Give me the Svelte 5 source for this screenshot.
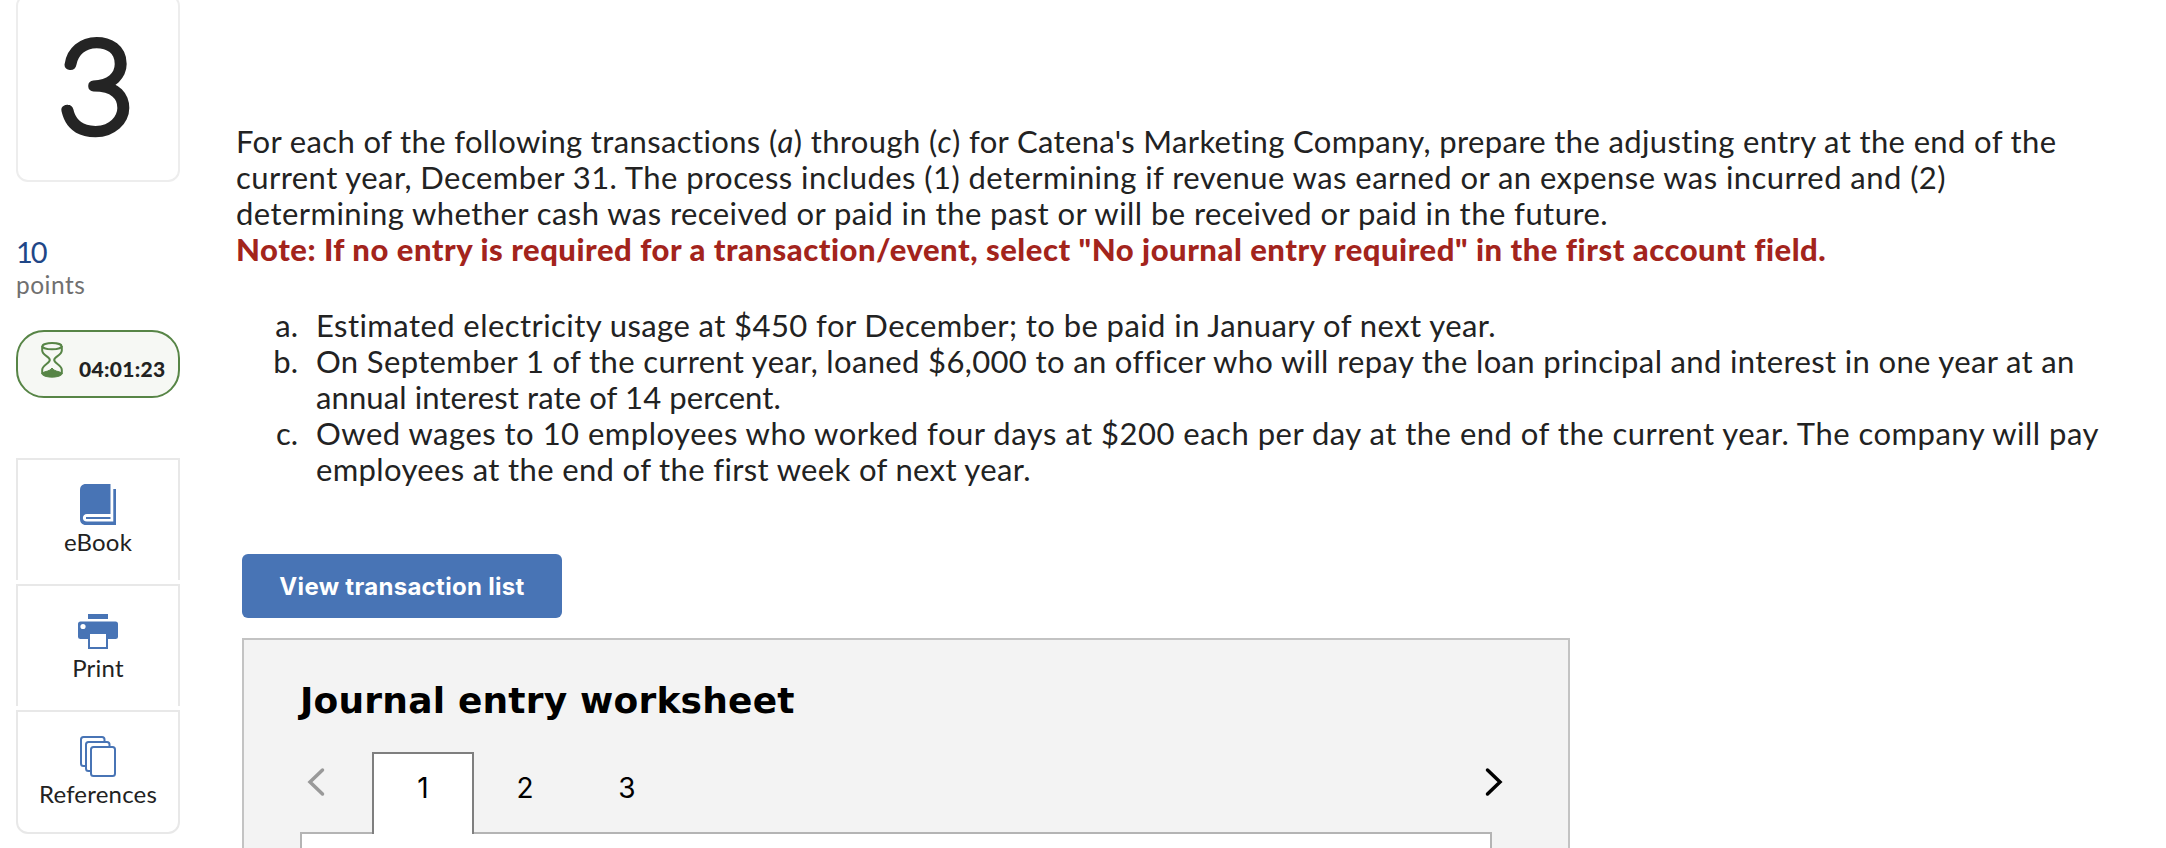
<script lang="ts">
  interface Line {
    text: string;
    spacing: number;
  }

  const tools = [
    { id: 'ebook', label: 'eBook' },
    { id: 'print', label: 'Print' },
    { id: 'references', label: 'References' }
  ];

  const transactions: { marker: string; lines: Line[] }[] = [
    {
      marker: 'a.',
      lines: [{ text: 'Estimated electricity usage at $450 for December; to be paid in January of next year.', spacing: 0.43 }]
    },
    {
      marker: 'b.',
      lines: [
        { text: 'On September 1 of the current year, loaned $6,000 to an officer who will repay the loan principal and interest in one year at an', spacing: 0.36 },
        { text: 'annual interest rate of 14 percent.', spacing: 0.11 }
      ]
    },
    {
      marker: 'c.',
      lines: [
        { text: 'Owed wages to 10 employees who worked four days at $200 each per day at the end of the current year. The company will pay', spacing: 0.495 },
        { text: 'employees at the end of the first week of next year.', spacing: 0.35 }
      ]
    }
  ];

  const pages = [1, 2, 3];
  let current = $state(1);
</script>

<div class="assignment">
  <aside class="sidebar">
    <div class="question-number">
      <svg width="160" height="182" viewBox="0 0 160 182">
        <text transform="translate(78 136) scale(1.04 1)" text-anchor="middle">3</text>
      </svg>
    </div>

    <div class="points">
      <strong>10</strong>
      <span>points</span>
    </div>

    <div class="timer">
      <svg width="22" height="36" viewBox="0 0 22 36" fill="none" stroke="#578546" stroke-width="2">
        <ellipse cx="11" cy="4.2" rx="9.6" ry="3.1" />
        <path d="M1.2 4v4.5c0 5 7.6 6 7.6 9.5S1.2 23 1.2 28v4M20.8 4v4.5c0 5-7.6 6-7.6 9.5s7.6 5 7.6 10v4" />
        <path d="M1.2 31c3-2 8-1.5 9.8-5 1.8 3.5 6.8 3 9.8 5v1.5c-3 3.5-16.6 3.5-19.6 0z" fill="#578546" stroke-width="1" />
      </svg>
      <span>04:01:23</span>
    </div>

    <nav class="tools">
      {#each tools as tool}
        <div class="tool">
          {#if tool.id === 'ebook'}
            <svg width="36" height="42" viewBox="0 0 36 42">
              <path d="M6 0h24.5v30H7c-5 0-6 7.5 0 7.5h26.3V5H36v36H6c-4 0-6-2.500-6-6V6c0-3.500 2-6 6-6z" fill="#4874b5" />
              <path d="M6 34h24.5" stroke="#4874b5" stroke-width="2" />
            </svg>
          {:else if tool.id === 'print'}
            <svg width="40" height="42" viewBox="0 0 40 42">
              <path d="M10 4h20v5H10zM2.5 11.5h35Q40 11.5 40 14v13q0 2-2.5 2H30v10H10V29H2.5Q0 29 0 27V14q0-2.5 2.5-2.5z" fill="#4874b5" />
              <path d="M12 24h16v13H12z" fill="#fff" />
              <circle cx="5" cy="16.5" r="2.6" fill="#fff" />
            </svg>
          {:else}
            <svg width="36" height="42" viewBox="0 0 36 42" fill="#fff" stroke="#4874b5" stroke-width="2">
              <rect x="1" y="1" width="23.5" height="29" rx="2.5" />
              <rect x="6" y="6" width="23.5" height="29" rx="2.5" />
              <rect x="11" y="11" width="24" height="29" rx="2.5" />
            </svg>
          {/if}
          <span class="tool-label">{tool.label}</span>
        </div>
      {/each}
    </nav>
  </aside>

  <main class="content">
    <div class="prompt">
      <div class="l1">For each of the following transactions (<i>a</i>) through (<i>c</i>) for Catena's Marketing Company, prepare the adjusting entry at the end of the</div>
      <div class="l2">current year, December 31. The process includes (1) determining if revenue was earned or an expense was incurred and (2)</div>
      <div class="l3">determining whether cash was received or paid in the past or will be received or paid in the future.</div>
      <div class="note">Note: If no entry is required for a transaction/event, select "No journal entry required" in the first account field.</div>
    </div>

    <div class="transactions">
      {#each transactions as item}
        <div class="transaction">
          <span class="marker">{item.marker}</span>
          <div>
            {#each item.lines as line}
              <div style:letter-spacing="{line.spacing}px">{line.text}</div>
            {/each}
          </div>
        </div>
      {/each}
    </div>

    <button class="view-btn">View transaction list</button>

    <section class="worksheet">
      <h2>Journal entry worksheet</h2>
      <div class="pager">
        <svg class="prev" width="18" height="30" viewBox="0 0 18 30"><path d="M15.5 3L3 15l12.5 12" /></svg>
        <div class="pages">
          {#each pages as page}
            <button class="page" class:active={page === current} onclick={() => (current = page)}>{page}</button>
          {/each}
        </div>
        <svg class="next" width="18" height="30" viewBox="0 0 18 30"><path d="M2.5 3L15 15 2.5 27" /></svg>
      </div>
      <div class="sheet"></div>
    </section>
  </main>
</div>

<style>
  :global(body) {
    margin: 0;
    background: #fff;
  }

  .assignment {
    display: flex;
    height: 848px;
    overflow: hidden;
    font-family: Lato, 'Open Sans', sans-serif;
    font-variant-ligatures: none;
    color: #222;
  }

  .sidebar {
    width: 164px;
    flex: none;
    margin-left: 16px;
  }

  .question-number {
    box-sizing: border-box;
    height: 188px;
    margin-top: -6px;
    border: 2px solid #ededed;
    border-radius: 12px;
  }

  .question-number svg {
    display: block;
  }

  .question-number text {
    font: 100 126px Lato, sans-serif;
    fill: #242424;
    stroke: #242424;
    stroke-width: 10px;
    stroke-linejoin: round;
  }

  .points {
    display: flex;
    flex-direction: column;
    height: 148px;
    padding-top: 53px;
    box-sizing: border-box;
  }

  .points strong {
    font-size: 29px;
    font-weight: 400;
    line-height: 34px;
    letter-spacing: -2px;
    color: #1f4787;
  }

  .points span {
    font-size: 24.5px;
    line-height: 32px;
    letter-spacing: 0.5px;
    color: #707070;
  }

  .timer {
    display: flex;
    box-sizing: border-box;
    height: 68px;
    padding: 10px 0 0 23px;
    border: 2px solid #578546;
    border-radius: 28px;
    background: #f6f8f4;
  }

  .timer span {
    margin: 15px 0 0 16px;
    font-size: 21px;
    line-height: 24px;
    letter-spacing: 0.3px;
    font-weight: 900;
  }

  .tools {
    display: flex;
    flex-direction: column;
    gap: 4px;
    margin-top: 60px;
  }

  .tool {
    display: flex;
    flex-direction: column;
    align-items: center;
    box-sizing: border-box;
    height: 122px;
    padding-top: 24px;
    border: 2px solid #e8e8e8;
    border-bottom: 0;
  }

  .tool:last-child {
    height: 124px;
    border-bottom: 2px solid #e8e8e8;
    border-radius: 0 0 12px 12px;
  }

  .tool-label {
    margin-top: 2px;
    font-size: 24px;
    line-height: 28px;
    letter-spacing: 0.2px;
  }

  .content {
    flex: none;
    width: 1900px;
    padding: 123px 0 0 56px;
  }

  .prompt,
  .transactions {
    font-size: 31px;
    line-height: 36px;
    white-space: nowrap;
  }

  .l1 {
    letter-spacing: 0.365px;
  }

  .l2 {
    letter-spacing: 0.445px;
  }

  .l3 {
    letter-spacing: 0.44px;
  }

  .note {
    letter-spacing: 0.53px;
    font-weight: 900;
    color: #a3241c;
  }

  .transactions {
    margin-top: 40px;
  }

  .transaction {
    display: flex;
    gap: 18px;
  }

  .marker {
    width: 62px;
    text-align: right;
  }

  .view-btn {
    display: block;
    width: 320px;
    height: 64px;
    margin: 67px 0 20px 6px;
    padding: 0;
    border: 0;
    border-radius: 6px;
    background: #4874b5;
    color: #fff;
    font: 700 24px Inter, sans-serif;
    letter-spacing: 0.3px;
  }

  .worksheet {
    box-sizing: border-box;
    width: 1328px;
    height: 240px;
    margin-left: 6px;
    padding: 39px 76px 0 56px;
    border: 2px solid #c3c3c3;
    background: #f3f3f3;
  }

  h2 {
    margin: 0;
    font: 700 36px/44px 'DejaVu Sans', sans-serif;
    letter-spacing: 0.2px;
    color: #000;
    white-space: nowrap;
  }

  .pager {
    display: flex;
    height: 82px;
    margin-top: 29px;
  }

  .pager svg {
    margin-top: 15px;
    fill: none;
    stroke: #999;
    stroke-width: 3.5;
    stroke-linecap: round;
  }

  .pager .prev {
    margin-left: 7px;
  }

  .pager .next {
    margin-left: auto;
    margin-right: -11px;
    stroke: #000;
  }

  .pages {
    display: flex;
    margin-left: 47px;
  }

  /* sits over the top border of the sheet below */
  .page {
    position: relative;
    box-sizing: border-box;
    width: 102px;
    padding: 0 0 12px;
    border: 2px solid transparent;
    border-bottom: 0;
    background: none;
    font: 28px Inter, sans-serif;
    color: #000;
  }

  .page.active {
    border-color: #7f7f7f;
    background: #fff;
  }

  .sheet {
    margin-top: -2px;
    border: 2px solid #b4b4b4;
    height: 60px;
    background: #fff;
  }
</style>
